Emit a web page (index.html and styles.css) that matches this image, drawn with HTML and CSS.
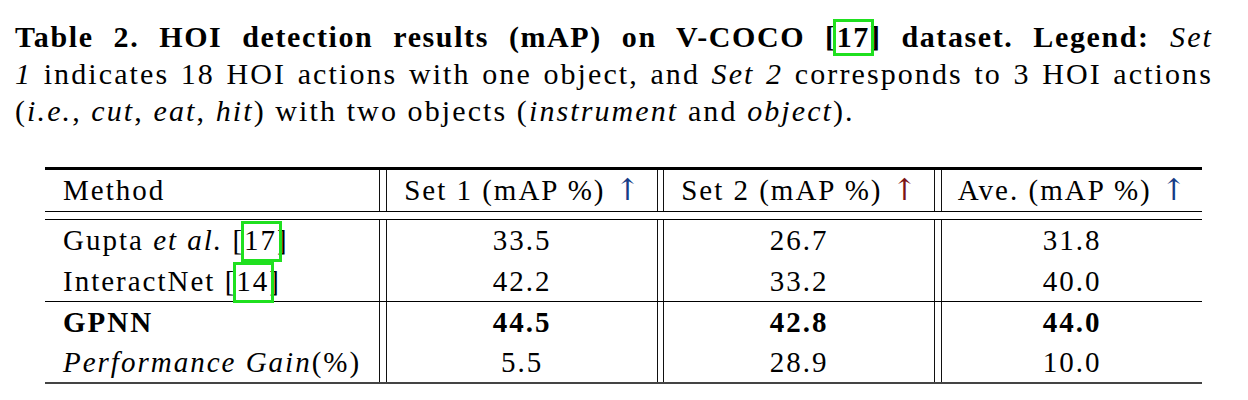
FILE: index.html
```html
<!DOCTYPE html>
<html>
<head>
<meta charset="utf-8">
<link rel="stylesheet" href="styles.css">
</head>
<body>
<div class="page">
  <div class="caption">
    <div class="line just"><b>Table 2. HOI detection results (mAP) on V-COCO [<span class="cite">17</span>] dataset. Legend:</b> <i>Set</i></div>
    <div class="line just"><i>1</i> indicates 18 HOI actions with one object, and <i>Set 2</i> corresponds to 3 HOI actions</div>
    <div class="line">(<i>i.e.</i>, <i>cut</i>, <i>eat</i>, <i>hit</i>) with two objects (<i>instrument</i> and <i>object</i>).</div>
  </div>

  <div class="tbl">
    <div class="rule-top"></div>
    <div class="row head">
      <div class="cell left">Method</div>
      <div class="sep"></div>
      <div class="cell">Set 1 (mAP %) <span class="arrow blue">↑</span></div>
      <div class="sep"></div>
      <div class="cell">Set 2 (mAP %) <span class="arrow red">↑</span></div>
      <div class="sep"></div>
      <div class="cell">Ave. (mAP %) <span class="arrow blue">↑</span></div>
    </div>
    <div class="rule-double"></div>
    <div class="row r1">
      <div class="cell left">Gupta <i>et al.</i> [<span class="cite c-tbl">17</span>]</div>
      <div class="sep"></div>
      <div class="cell">33.5</div>
      <div class="sep"></div>
      <div class="cell">26.7</div>
      <div class="sep"></div>
      <div class="cell">31.8</div>
    </div>
    <div class="row r2">
      <div class="cell left">InteractNet [<span class="cite c-tbl">14</span>]</div>
      <div class="sep"></div>
      <div class="cell">42.2</div>
      <div class="sep"></div>
      <div class="cell">33.2</div>
      <div class="sep"></div>
      <div class="cell">40.0</div>
    </div>
    <div class="rule"></div>
    <div class="row r3">
      <div class="cell left"><b>GPNN</b></div>
      <div class="sep"></div>
      <div class="cell"><b>44.5</b></div>
      <div class="sep"></div>
      <div class="cell"><b>42.8</b></div>
      <div class="sep"></div>
      <div class="cell"><b>44.0</b></div>
    </div>
    <div class="row r4">
      <div class="cell left"><i>Performance Gain</i>(%)</div>
      <div class="sep"></div>
      <div class="cell">5.5</div>
      <div class="sep"></div>
      <div class="cell">28.9</div>
      <div class="sep"></div>
      <div class="cell">10.0</div>
    </div>
    <div class="rule-bottom"></div>
  </div>
</div>
</body>
</html>
```

FILE: styles.css
```css
html, body {
  margin: 0;
  padding: 0;
  background: #ffffff;
}

body {
  font-family: "Liberation Serif", "DejaVu Serif", serif;
  color: #000000;
}

.page {
  width: 1248px;
  height: 400px;
  overflow: hidden;
}

.caption {
  margin-left: 15px;
  width: 1198px;
  padding-top: 18px;
  font-size: 30px;
  letter-spacing: 2.1px;
}

.caption b {
  letter-spacing: 1.6px;
}

.line {
  height: 37px;
  line-height: 37px;
  white-space: nowrap;
}

.line.just {
  text-align: justify;
  text-align-last: justify;
  white-space: normal;
}

.cite {
  position: relative;
}

.cite::after {
  content: "";
  position: absolute;
  left: -4px;
  right: -4px;
  top: -1px;
  bottom: -3px;
  border: 3px solid #1fe01f;
}

.cite.c-tbl::after {
  left: -3px;
  right: -5px;
  top: -3px;
  bottom: -6px;
}

.tbl {
  margin-top: 38px;
  margin-left: 45px;
  width: 1157px;
  font-size: 29px;
  letter-spacing: 2px;
}

.rule-top {
  height: 3px;
  background: #000000;
}

.rule-double {
  height: 7px;
  border-top: 1px solid #000000;
  border-bottom: 1px solid #000000;
}

.rule {
  height: 1px;
  background: #000000;
}

.rule-bottom {
  height: 2px;
  background: #444444;
}

.row {
  display: grid;
  grid-template-columns: 334px 8px 270px 7px 270px 8px 260px;
  height: 41px;
}

.row.r2,
.row.r3,
.row.r4 {
  height: 40px;
}

.cell {
  line-height: 40px;
  text-align: center;
  white-space: nowrap;
}

.cell.left {
  text-align: left;
  padding-left: 18px;
}

.sep {
  box-sizing: border-box;
  border-left: 1px solid #111111;
  border-right: 1px solid #111111;
}

.arrow {
  font-family: "DejaVu Serif", serif;
  font-size: 30px;
  line-height: 1;
  letter-spacing: 0;
}

.arrow.blue {
  color: #163c86;
}

.arrow.red {
  color: #7a1414;
}
```
